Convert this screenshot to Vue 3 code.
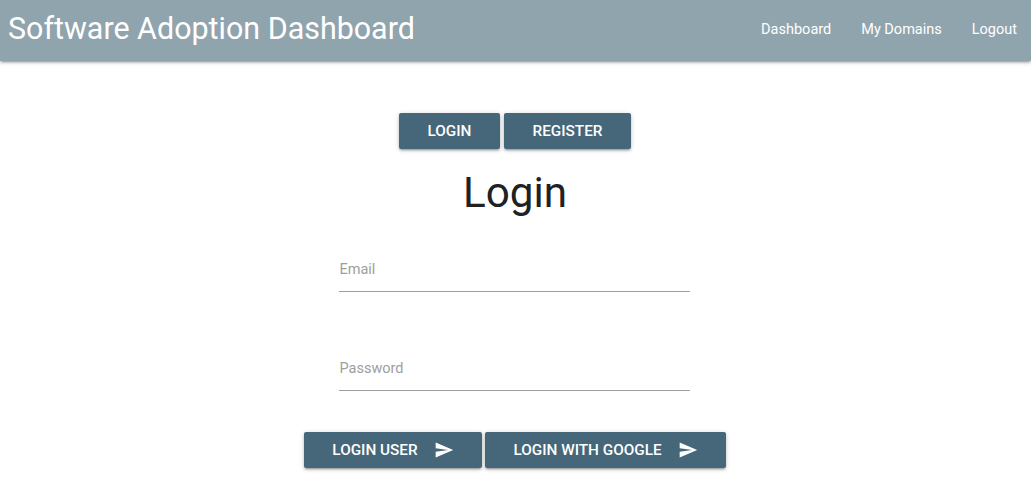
<template>
  <div class="page">
    <nav class="topbar">
      <div class="brand">Software Adoption Dashboard</div>
      <ul class="nav-links">
        <li v-for="link in links" :key="link">{{ link }}</li>
      </ul>
    </nav>

    <main class="content">
      <div class="tabs">
        <button class="btn tab-login">LOGIN</button>
        <button class="btn tab-register">REGISTER</button>
      </div>

      <h1 class="title">Login</h1>

      <div class="fields">
        <div v-for="field in fields" :key="field" class="field">
          <span class="field-label">{{ field }}</span>
        </div>
      </div>

      <div class="actions">
        <button class="btn action-user">
          LOGIN USER
          <svg class="send" viewBox="0 0 24 24"><path d="M2.01 21 23 12 2.01 3 2 10l15 2-15 2z" /></svg>
        </button>
        <button class="btn action-google">
          LOGIN WITH GOOGLE
          <svg class="send" viewBox="0 0 24 24"><path d="M2.01 21 23 12 2.01 3 2 10l15 2-15 2z" /></svg>
        </button>
      </div>
    </main>
  </div>
</template>

<script setup>
const links = ['Dashboard', 'My Domains', 'Logout']
const fields = ['Email', 'Password']
</script>

<style>
html, body {
  overflow: hidden;
  background: #fff;
}
</style>

<style scoped>
.page {
  height: 480px;
  overflow: hidden;
  font-family: Roboto, "Liberation Sans", sans-serif;
  color: #212121;
}

.topbar {
  height: 61px;
  background: #90a4ae;
  color: #fff;
  display: flex;
  align-items: center;
  justify-content: space-between;
  padding: 0 14px 0 8px;
  box-shadow: 0 2px 2px 0 rgba(0,0,0,0.14), 0 3px 1px -2px rgba(0,0,0,0.12), 0 1px 5px 0 rgba(0,0,0,0.2);
}

.brand {
  font-size: 30.45px;
  line-height: 1;
  padding-bottom: 2px;
}

.nav-links {
  display: flex;
  gap: 30px;
  list-style: none;
  margin: 0;
  padding: 0 0 2px;
  font-size: 14.5px;
}

.content {
  display: flex;
  flex-direction: column;
  align-items: center;
  padding-top: 52px;
  padding-right: 1px;
}

.tabs,
.actions {
  display: flex;
  height: 36px;
}

.tabs { gap: 4px; }
.actions { gap: 3px; }

.btn {
  height: 36px;
  padding: 0;
  border: none;
  border-radius: 2px;
  background: #456779;
  color: #fff;
  font-family: inherit;
  font-size: 15.3px;
  font-weight: 500;
  display: flex;
  align-items: center;
  justify-content: center;
  box-shadow: 0 2px 2px 0 rgba(0,0,0,0.14), 0 3px 1px -2px rgba(0,0,0,0.12), 0 1px 5px 0 rgba(0,0,0,0.2);
}

.tab-login { width: 101px; }
.tab-register { width: 127px; }
.action-user { width: 178px; }
.action-google { width: 241px; }

.send {
  width: 20px;
  height: 20px;
  margin-left: 16px;
  fill: #fff;
}

.title {
  margin: 17px 0 0;
  font-size: 42.2px;
  font-weight: 400;
  line-height: 54px;
}

.fields {
  width: 351px;
  margin-top: 25px;
  margin-left: -1px;
  display: flex;
  flex-direction: column;
  gap: 52px;
}

.field {
  height: 46px;
  border-bottom: 1px solid #9e9e9e;
  box-sizing: content-box;
  display: flex;
  align-items: flex-start;
}

.field-label {
  margin-top: 16px;
  margin-left: 0.5px;
  font-size: 14.5px;
  line-height: 17px;
  color: #9e9e9e;
}

.actions {
  margin-top: 41px;
}
</style>
